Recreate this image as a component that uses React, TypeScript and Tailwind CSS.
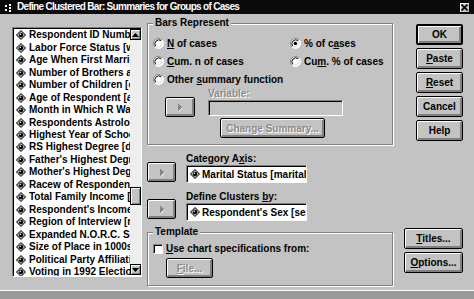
import React from "react";

const BG = "bg-[#c3c3c3]";

function VarIcon() {
  return (
    <svg width="10" height="10" viewBox="0 0 10 10" className="shrink-0">
      <polygon points="5,0.5 9.5,5 5,9.5 0.5,5" fill="#b0b0b0" stroke="#000" strokeWidth="1" />
      <circle cx="5" cy="5" r="2.2" fill="#000" />
      <circle cx="4.3" cy="4.3" r="0.8" fill="#fff" />
    </svg>
  );
}

function Radio({ checked }: { checked?: boolean }) {
  return (
    <svg width="11" height="11" viewBox="0 0 11 11" className="shrink-0">
      <circle cx="5.5" cy="5.5" r="5" fill="#fff" />
      <path d="M9.04 1.96 A5 5 0 0 0 1.96 9.04" fill="none" stroke="#808080" strokeWidth="1" />
      <path d="M8.3 2.7 A4 4 0 0 0 2.7 8.3" fill="none" stroke="#000" strokeWidth="1" />
      <path d="M1.96 9.04 A5 5 0 0 0 9.04 1.96" fill="none" stroke="#fff" strokeWidth="1" />
      <path d="M2.7 8.3 A4 4 0 0 0 8.3 2.7" fill="none" stroke="#dcdcdc" strokeWidth="1" />
      {checked && <circle cx="5.5" cy="5.5" r="1.8" fill="#000" />}
    </svg>
  );
}

function Btn({
  children,
  className = "",
  def,
  disabled,
}: {
  children: React.ReactNode;
  className?: string;
  def?: boolean;
  disabled?: boolean;
}) {
  return (
    <div
      className={`${BG} flex items-center justify-center rounded-[2px] ${
        def ? "border-2" : "border"
      } border-black shadow-[inset_1px_1px_0_#fff,inset_-2px_-2px_0_#808080] ${
        disabled ? "text-[#8a8a8a] [text-shadow:1px_1px_0_#fff]" : ""
      } ${className}`}
    >
      {children}
    </div>
  );
}

function ArrowBtn({ className = "" }: { className?: string }) {
  return (
    <Btn className={className}>
      <svg width="6" height="9" viewBox="0 0 6 9">
        <polygon points="1,0.5 5.5,4.5 1,8.5" fill="#858585" />
        <line x1="1.5" y1="8.5" x2="5.5" y2="4.8" stroke="#fff" strokeWidth="1" />
      </svg>
    </Btn>
  );
}

function U({ children }: { children: React.ReactNode }) {
  return <span className="underline underline-offset-[1px]">{children}</span>;
}

const items = [
  "Respondent ID Number [id]",
  "Labor Force Status [wrkstat]",
  "Age When First Married [agewed]",
  "Number of Brothers and Sisters [sibs]",
  "Number of Children [childs]",
  "Age of Respondent [age]",
  "Month in Which R Was Born [born]",
  "Respondents Astrological Sign [zodiac]",
  "Highest Year of School Completed [educ]",
  "RS Highest Degree [degree]",
  "Father's Highest Degree [padeg]",
  "Mother's Highest Degree [madeg]",
  "Racew of Respondent [race]",
  "Total Family Income [income91]",
  "Respondent's Income [rincom91]",
  "Region of Interview [region]",
  "Expanded N.O.R.C. Size Code [xnorcsiz]",
  "Size of Place in 1000s [size]",
  "Political Party Affiliation [partyid]",
  "Voting in 1992 Election [vote92]",
];

function ScrollArrow({ down }: { down?: boolean }) {
  return (
    <div className={`${BG} h-[11px] w-[11px] flex items-center justify-center border border-black shadow-[inset_1px_1px_0_#fff,inset_-1px_-1px_0_#808080]`}>
      <svg width="7" height="4" viewBox="0 0 7 4">
        <polygon points={down ? "0,0 7,0 3.5,4" : "0,4 7,4 3.5,0"} fill="#000" />
      </svg>
    </div>
  );
}

function Group({
  label,
  className = "",
  children,
}: {
  label: string;
  className?: string;
  children: React.ReactNode;
}) {
  return (
    <div className={`relative border border-[#808080] shadow-[1px_1px_0_#fff,inset_1px_1px_0_#fff] ${className}`}>
      <div className={`absolute left-[5px] top-[-7px] px-[2px] leading-[12px] ${BG}`}>{label}</div>
      {children}
    </div>
  );
}

function Field({ children, className = "", disabled }: { children?: React.ReactNode; className?: string; disabled?: boolean }) {
  return (
    <div
      className={`${disabled ? BG : "bg-white"} border-t border-l border-[#808080] border-b border-r border-b-white border-r-white shadow-[inset_1px_1px_0_#000] flex items-center overflow-hidden whitespace-nowrap pl-[3px] gap-[2px] ${className}`}
    >
      {children}
    </div>
  );
}

export default function App() {
  return (
    <div className="w-[474px] h-[299px] bg-[#9a9a9a] overflow-hidden font-['Liberation_Sans',Arial,sans-serif] font-bold text-[10px] text-black">
      <div className={`h-[291px] ${BG} border-b border-white flex flex-col`}>
        {/* title bar */}
        <div className="h-[14px] bg-[#0a0a0a] flex items-center text-white">
          <svg width="12" height="12" viewBox="0 0 12 12" className="ml-[3px]">
            <rect x="2" y="4" width="2" height="2" fill="#fff" />
            <rect x="2" y="8" width="2" height="2" fill="#fff" />
            <rect x="6" y="3" width="2" height="2" fill="#fff" />
            <rect x="6" y="6" width="2" height="2" fill="#fff" />
            <rect x="6" y="9" width="2" height="2" fill="#fff" />
          </svg>
          <span className="ml-[2px] tracking-[-0.7px] leading-[14px]">
            Define Clustered Bar: Summaries for Groups of Cases
          </span>
          <div className={`ml-auto mr-[4px] h-[11px] w-[11px] ${BG} flex items-center justify-center border border-black shadow-[inset_1px_1px_0_#fff]`}>
            <svg width="7" height="7" viewBox="0 0 7 7">
              <path d="M0.5 0.5 L6.5 6.5 M6.5 0.5 L0.5 6.5" stroke="#000" strokeWidth="1.6" />
            </svg>
          </div>
        </div>

        <div className="flex flex-1">
          {/* list */}
          <div className="ml-[12px] mt-[13px] w-[130px] h-[250px] bg-white border-t border-l border-[#808080] border-b border-r border-b-white border-r-white shadow-[inset_1px_1px_0_#000] flex">
            <div className="flex-1 overflow-hidden pt-[1px] pl-[3px]">
              {items.map((t) => (
                <div key={t} className="h-[12.47px] flex items-center gap-[3px] whitespace-nowrap leading-[12px]">
                  <VarIcon />
                  <span>{t}</span>
                </div>
              ))}
            </div>
            <div className="w-[11px] mt-[1px] mb-[1px] flex flex-col bg-[#eeeeee]">
              <ScrollArrow />
              <div className="flex-1 relative">
                <div className={`absolute left-0 top-[147px] h-[18px] w-[11px] ${BG} border border-black shadow-[inset_1px_1px_0_#fff,inset_-1px_-1px_0_#808080]`} />
              </div>
              <ScrollArrow down />
            </div>
          </div>

          {/* middle */}
          <div className="ml-[5px] w-[246px] flex flex-col">
            <Group label="Bars Represent" className="mt-[9px] h-[122px] pt-[10px] pl-[5px]">
              <div className="flex h-[18px] items-center">
                <div className="w-[137px] flex items-center gap-[3px]">
                  <Radio />
                  <span><U>N</U> of cases</span>
                </div>
                <div className="flex items-center gap-[3px]">
                  <Radio checked />
                  <span>% of c<U>a</U>ses</span>
                </div>
              </div>
              <div className="flex h-[18px] items-center">
                <div className="w-[137px] flex items-center gap-[3px]">
                  <Radio />
                  <span><U>C</U>um. n of cases</span>
                </div>
                <div className="flex items-center gap-[3px]">
                  <Radio />
                  <span>Cu<U>m</U>. % of cases</span>
                </div>
              </div>
              <div className="flex h-[18px] items-center gap-[3px]">
                <Radio />
                <span>Other <U>s</U>ummary function</span>
              </div>
              <div className="flex items-start">
                <ArrowBtn className="ml-[12px] mt-[9px] w-[30px] h-[20px]" />
                <div className="ml-[13px] flex flex-col">
                  <div className="h-[12px] leading-[12px] text-[#8a8a8a] [text-shadow:1px_1px_0_#fff]">Variable:</div>
                  <Field disabled className="w-[135px] h-[16px]" />
                  <Btn disabled className="ml-[12px] mt-[2px] w-[105px] h-[20px]">Change Summary...</Btn>
                </div>
              </div>
            </Group>

            <div className="mt-[8px] flex items-start">
              <ArrowBtn className="mt-[9px] w-[29px] h-[20px]" />
              <div className="ml-[10px] flex flex-col">
                <div className="h-[12px] leading-[12px]">Category A<U>x</U>is:</div>
                <Field className="w-[121px] h-[18px]">
                  <VarIcon />
                  <span>Marital Status [marital]</span>
                </Field>
              </div>
            </div>

            <div className="mt-[8px] flex items-start">
              <ArrowBtn className="mt-[8px] w-[29px] h-[20px]" />
              <div className="ml-[10px] flex flex-col">
                <div className="h-[12px] leading-[12px]">Define Clusters <U>b</U>y:</div>
                <Field className="w-[121px] h-[18px]">
                  <VarIcon />
                  <span>Respondent's Sex [sex]</span>
                </Field>
              </div>
            </div>

            <Group label="Template" className="mt-[11px] h-[54px] pt-[10px] pl-[5px]">
              <div className="flex items-center gap-[3px] h-[11px]">
                <div className="w-[10px] h-[10px] bg-white border-t border-l border-[#808080] border-b border-r border-b-white border-r-white shadow-[inset_1px_1px_0_#000]" />
                <span><U>U</U>se chart specifications from:</span>
              </div>
              <Btn disabled className="ml-[13px] mt-[4px] w-[47px] h-[20px]"><span><U>F</U>ile...</span></Btn>
            </Group>
          </div>

          {/* right */}
          <div className="ml-[11px] w-[59px] flex flex-col items-end">
            <Btn def className="mt-[10px] w-[47px] h-[21px]">OK</Btn>
            <Btn className="mt-[3px] w-[47px] h-[21px]"><span><U>P</U>aste</span></Btn>
            <Btn className="mt-[3px] w-[47px] h-[21px]"><span><U>R</U>eset</span></Btn>
            <Btn className="mt-[3px] w-[47px] h-[21px]">Cancel</Btn>
            <Btn className="mt-[3px] w-[47px] h-[21px]">Help</Btn>
            <Btn className="mt-[87px] w-[59px] h-[21px]"><span><U>T</U>itles...</span></Btn>
            <Btn className="mt-[3px] w-[59px] h-[21px]"><span><U>O</U>ptions...</span></Btn>
          </div>
        </div>
      </div>
    </div>
  );
}
